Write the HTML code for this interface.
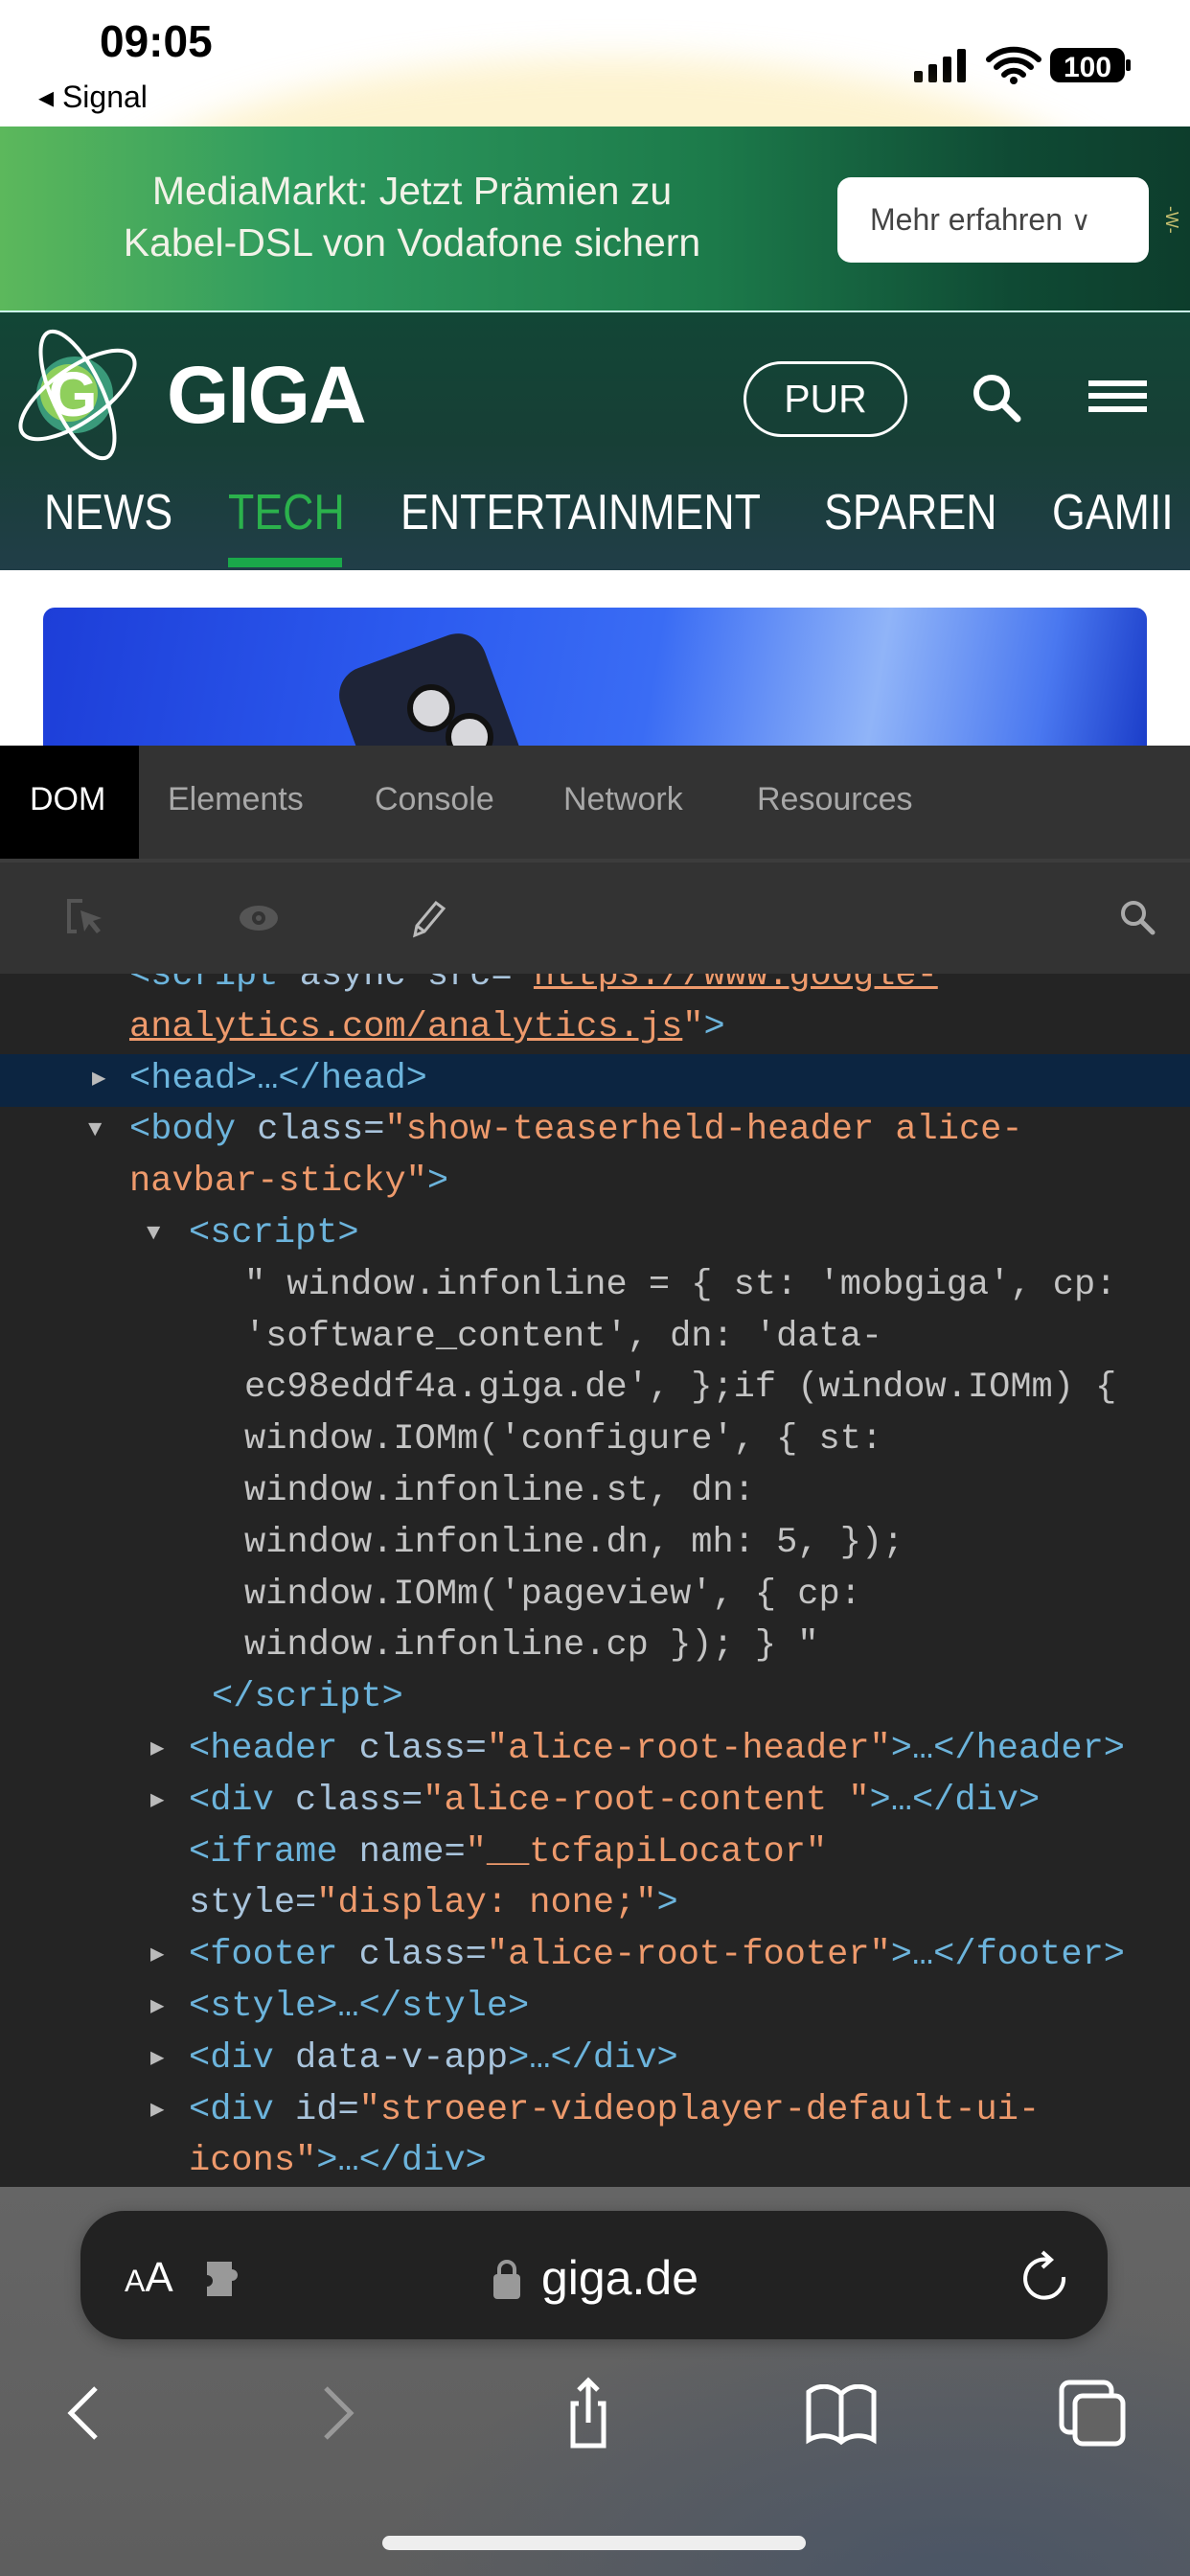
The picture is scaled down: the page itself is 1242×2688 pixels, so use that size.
<!DOCTYPE html>
<html style="width:1242px;height:2688px;overflow:hidden"><head><meta charset="utf-8"><style>
*{margin:0;padding:0;box-sizing:border-box}
body{width:1242px;height:2688px;position:relative;overflow:hidden;background:#fff;font-family:"Liberation Sans",sans-serif}
.a{position:absolute}
.code{position:absolute;left:0;top:992px;width:1242px;font-family:"Liberation Mono",monospace;font-size:37px;color:#c4c4c4}
.code div{height:53.8px;line-height:53.8px;position:relative;white-space:pre}
.t{color:#6cb4dc}.n{color:#a9c4dc}.v{color:#ee9a6c}
.tri{position:absolute;font-size:24px;color:#bbb}
.nav{position:absolute;top:505px;font-size:52px;color:#fff;transform:scaleX(.86);transform-origin:left;white-space:nowrap}
.tab{position:absolute;top:815px;font-size:34px;color:#a8a8a8}
</style></head><body>
<div class="a" style="left:104px;top:16px;font-size:46px;font-weight:bold;color:#000">09:05</div>
<div class="a" style="left:40px;top:82px;font-size:32px;color:#000">◂ Signal</div>
<svg class="a" style="left:952px;top:48px" width="230" height="40" viewBox="0 0 230 40">
<rect x="2" y="26" width="9" height="12" rx="2"/><rect x="17" y="19" width="9" height="19" rx="2"/><rect x="32" y="11" width="9" height="27" rx="2"/><rect x="47" y="3" width="9" height="35" rx="2"/>
<path d="M80 14a38 38 0 0 1 52 0M88 22a26 26 0 0 1 36 0M96 30a14 14 0 0 1 20 0" stroke="#000" stroke-width="6" fill="none" stroke-linecap="round"/><circle cx="106" cy="36" r="4"/>
<rect x="144" y="2" width="78" height="36" rx="10"/><rect x="223" y="14" width="5" height="12" rx="2"/>
<text x="183" y="32" text-anchor="middle" font-family="Liberation Sans" font-weight="bold" font-size="30" fill="#fff">100</text></svg>
<div class="a" style="left:80px;top:60px;width:1120px;height:380px;border-radius:50%;background:rgba(250,220,120,.35);filter:blur(18px)"></div>
<div class="a" style="left:0;top:132px;width:1242px;height:192px;background:linear-gradient(90deg,#5cb85c 0%,#2e9a5e 25%,#1c7a4a 60%,#0f4a34 85%,#0d3d2c 100%)"></div>
<div class="a" style="left:40px;top:172px;width:780px;text-align:center;font-size:41px;line-height:54px;color:#f2f2e8">MediaMarkt: Jetzt Prämien zu<br>Kabel-DSL von Vodafone sichern</div>
<div class="a" style="left:874px;top:185px;width:325px;height:89px;background:#fff;border-radius:14px;font-size:32px;color:#444;line-height:89px;padding-left:34px">Mehr erfahren <span style="font-size:28px">∨</span></div>
<div class="a" style="left:1212px;top:215px;font-size:18px;color:#c8c070;writing-mode:vertical-rl">-W-</div>
<div class="a" style="left:0;top:324px;width:1242px;height:2px;background:#cfe"></div>
<div class="a" style="left:0;top:326px;width:1242px;height:269px;background:linear-gradient(180deg,#124636 0%,#173f36 50%,#213e48 100%)"></div>
<svg class="a" style="left:6px;top:330px" width="160" height="160" viewBox="0 0 160 160">
<circle cx="72" cy="82" r="40" fill="#3a9a7a"/><circle cx="66" cy="80" r="30" fill="#8fcf5c"/>
<text x="70" y="104" text-anchor="middle" font-family="Liberation Sans" font-weight="bold" font-size="66" fill="#fff">G</text>
<ellipse cx="75" cy="82" rx="70" ry="28" transform="rotate(-35 75 82)" fill="none" stroke="#fff" stroke-width="4"/>
<ellipse cx="75" cy="82" rx="72" ry="26" transform="rotate(65 75 82)" fill="none" stroke="#fff" stroke-width="4"/></svg>
<div class="a" style="left:174px;top:364px;font-size:84px;font-weight:bold;color:#fff;letter-spacing:-2px">GIGA</div>
<div class="a" style="left:776px;top:377px;width:171px;height:79px;border:3px solid #fff;border-radius:40px;color:#fff;font-size:41px;text-align:center;line-height:73px">PUR</div>
<svg class="a" style="left:1010px;top:385px" width="60" height="60"><circle cx="25" cy="25" r="16" fill="none" stroke="#fff" stroke-width="6"/><path d="M37 37l15 15" stroke="#fff" stroke-width="7" stroke-linecap="round"/></svg>
<div class="a" style="left:1136px;top:397px;width:61px;height:6px;background:#fff"></div>
<div class="a" style="left:1136px;top:410px;width:61px;height:6px;background:#fff"></div>
<div class="a" style="left:1136px;top:424px;width:61px;height:6px;background:#fff"></div>
<div class="nav" style="left:46px">NEWS</div>
<div class="nav" style="left:238px;color:#2bb24c">TECH</div>
<div class="nav" style="left:418px">ENTERTAINMENT</div>
<div class="nav" style="left:860px">SPAREN</div>
<div class="nav" style="left:1098px">GAMII</div>
<div class="a" style="left:238px;top:582px;width:119px;height:10px;background:#1aa84a"></div>
<div class="a" style="left:45px;top:634px;width:1152px;height:160px;border-radius:12px;background:linear-gradient(100deg,#1d3ed8 0%,#2d5cf0 35%,#3a6cf4 55%,#90b4f8 75%,#4a78f0 90%,#1a3cc8 100%);overflow:hidden">
<div class="a" style="left:330px;top:40px;width:160px;height:200px;background:#1e2438;border-radius:30px;transform:rotate(-20deg)"></div>
<div class="a" style="left:380px;top:80px;width:50px;height:50px;border-radius:50%;background:#d8d8dc;border:6px solid #111"></div>
<div class="a" style="left:420px;top:110px;width:50px;height:50px;border-radius:50%;background:#d8d8dc;border:6px solid #111"></div>
</div>
<div class="a" style="left:0;top:778px;width:1242px;height:118px;background:#333"></div>
<div class="a" style="left:0;top:778px;width:145px;height:118px;background:#000"></div>
<div class="tab" style="left:31px;color:#fff">DOM</div>
<div class="tab" style="left:175px">Elements</div>
<div class="tab" style="left:391px">Console</div>
<div class="tab" style="left:588px">Network</div>
<div class="tab" style="left:790px">Resources</div>
<div class="a" style="left:0;top:1015px;width:1242px;height:1267px;background:#242424"></div>
<div class="a" style="left:0;top:1100px;width:1242px;height:55px;background:#0c2541"></div>
<div class="code"><div style="padding-left:135px"><span class="t">&lt;script </span><span class="n">async src=</span><span class="v">"<u>https://www.google-</u></span></div><div style="padding-left:135px"><span class="v"><u>analytics.com/analytics.js</u>"</span><span class="t">&gt;</span></div><div style="padding-left:135px"><span class="tri" style="left:96px">▶</span><span class="t">&lt;head&gt;…&lt;/head&gt;</span></div><div style="padding-left:135px"><span class="tri" style="left:92px">▼</span><span class="t">&lt;body </span><span class="n">class=</span><span class="v">"show-teaserheld-header alice-</span></div><div style="padding-left:135px"><span class="v">navbar-sticky"</span><span class="t">&gt;</span></div><div style="padding-left:197px"><span class="tri" style="left:153px">▼</span><span class="t">&lt;script&gt;</span></div><div style="padding-left:255px">" window.infonline = { st: 'mobgiga', cp:</div><div style="padding-left:255px">'software_content', dn: 'data-</div><div style="padding-left:255px">ec98eddf4a.giga.de', };if (window.IOMm) {</div><div style="padding-left:255px">window.IOMm('configure', { st:</div><div style="padding-left:255px">window.infonline.st, dn:</div><div style="padding-left:255px">window.infonline.dn, mh: 5, });</div><div style="padding-left:255px">window.IOMm('pageview', { cp:</div><div style="padding-left:255px">window.infonline.cp }); } "</div><div style="padding-left:221px"><span class="t">&lt;/script&gt;</span></div><div style="padding-left:197px"><span class="tri" style="left:157px">▶</span><span class="t">&lt;header </span><span class="n">class=</span><span class="v">"alice-root-header"</span><span class="t">&gt;…&lt;/header&gt;</span></div><div style="padding-left:197px"><span class="tri" style="left:157px">▶</span><span class="t">&lt;div </span><span class="n">class=</span><span class="v">"alice-root-content "</span><span class="t">&gt;…&lt;/div&gt;</span></div><div style="padding-left:197px"><span class="t">&lt;iframe </span><span class="n">name=</span><span class="v">"__tcfapiLocator"</span></div><div style="padding-left:197px"><span class="n">style=</span><span class="v">"display: none;"</span><span class="t">&gt;</span></div><div style="padding-left:197px"><span class="tri" style="left:157px">▶</span><span class="t">&lt;footer </span><span class="n">class=</span><span class="v">"alice-root-footer"</span><span class="t">&gt;…&lt;/footer&gt;</span></div><div style="padding-left:197px"><span class="tri" style="left:157px">▶</span><span class="t">&lt;style&gt;…&lt;/style&gt;</span></div><div style="padding-left:197px"><span class="tri" style="left:157px">▶</span><span class="t">&lt;div </span><span class="n">data-v-app</span><span class="t">&gt;…&lt;/div&gt;</span></div><div style="padding-left:197px"><span class="tri" style="left:157px">▶</span><span class="t">&lt;div </span><span class="n">id=</span><span class="v">"stroeer-videoplayer-default-ui-</span></div><div style="padding-left:197px"><span class="v">icons"</span><span class="t">&gt;…&lt;/div&gt;</span></div></div>
<div class="a" style="left:0;top:896px;width:1242px;height:4px;background:#3c3c3c"></div>
<div class="a" style="left:0;top:900px;width:1242px;height:116px;background:#333"></div>
<svg class="a" style="left:68px;top:936px" width="44" height="44"><path d="M18 4H4v32h8" fill="none" stroke="#555" stroke-width="4"/><path d="M16 14l22 8-9 3 8 10-4 3-8-10-5 8z" fill="#555"/></svg>
<svg class="a" style="left:248px;top:942px" width="44" height="32"><ellipse cx="22" cy="16" rx="20" ry="13" fill="#555"/><circle cx="22" cy="16" r="7" fill="#333"/><circle cx="22" cy="16" r="3" fill="#555"/></svg>
<svg class="a" style="left:425px;top:936px" width="44" height="44"><path d="M8 40l2-10L30 6l8 6-20 24z M10 30l8 6" fill="none" stroke="#bbb" stroke-width="3"/></svg>
<svg class="a" style="left:1168px;top:938px" width="40" height="40"><circle cx="15" cy="15" r="11" fill="none" stroke="#aaa" stroke-width="4"/><path d="M23 23l12 12" stroke="#aaa" stroke-width="5" stroke-linecap="round"/></svg>
<div class="a" style="left:0;top:2282px;width:1242px;height:406px;background:radial-gradient(ellipse 600px 300px at 1000px 420px,#4a5566 0%,rgba(99,99,99,0) 100%),linear-gradient(180deg,#656565,#5e5e5e)"></div>
<div class="a" style="left:84px;top:2307px;width:1072px;height:134px;background:#222;border-radius:46px;box-shadow:0 4px 16px rgba(0,0,0,.3)"></div>
<div class="a" style="left:130px;top:2352px;color:#fff;font-size:44px"><span style="font-size:32px">A</span>A</div>
<svg class="a" style="left:214px;top:2358px" width="50" height="40"><path d="M2 2h26v8a6 6 0 0 1 0 12v16H2v-10a6 6 0 0 0 0-12z" fill="#999"/></svg>
<svg class="a" style="left:512px;top:2354px" width="34" height="46"><path d="M9 20v-6a8 8 0 0 1 16 0v6" fill="none" stroke="#999" stroke-width="4"/><rect x="3" y="19" width="28" height="26" rx="4" fill="#999"/></svg>
<div class="a" style="left:565px;top:2348px;color:#fff;font-size:50px">giga.de</div>
<svg class="a" style="left:1064px;top:2348px" width="54" height="64"><path d="M30 10A20 20 0 1 0 46 28" fill="none" stroke="#fff" stroke-width="4"/><path d="M24 2l9 8-9 8" fill="none" stroke="#fff" stroke-width="4"/></svg>
<svg class="a" style="left:60px;top:2488px" width="50" height="60"><path d="M40 4L14 30l26 26" fill="none" stroke="#fff" stroke-width="5"/></svg>
<svg class="a" style="left:330px;top:2488px" width="50" height="60"><path d="M10 4l26 26-26 26" fill="none" stroke="#999" stroke-width="5"/></svg>
<svg class="a" style="left:582px;top:2480px" width="64" height="78"><path d="M22 28h-6v44h32V28h-6M32 4v44M22 14L32 4l10 10" fill="none" stroke="#fff" stroke-width="5"/></svg>
<svg class="a" style="left:840px;top:2488px" width="76" height="64"><path d="M4 8c10-8 24-8 34 2c10-10 24-10 34-2v50c-10-6-24-6-34 2c-10-8-24-8-34-2zM38 10v50" fill="none" stroke="#fff" stroke-width="5"/></svg>
<svg class="a" style="left:1104px;top:2482px" width="72" height="72"><rect x="4" y="4" width="52" height="52" rx="8" fill="none" stroke="#fff" stroke-width="5"/><rect x="18" y="18" width="50" height="50" rx="8" fill="#636363" stroke="#fff" stroke-width="5"/></svg>
<div class="a" style="left:399px;top:2646px;width:442px;height:15px;border-radius:8px;background:#eee"></div>
</body></html>
